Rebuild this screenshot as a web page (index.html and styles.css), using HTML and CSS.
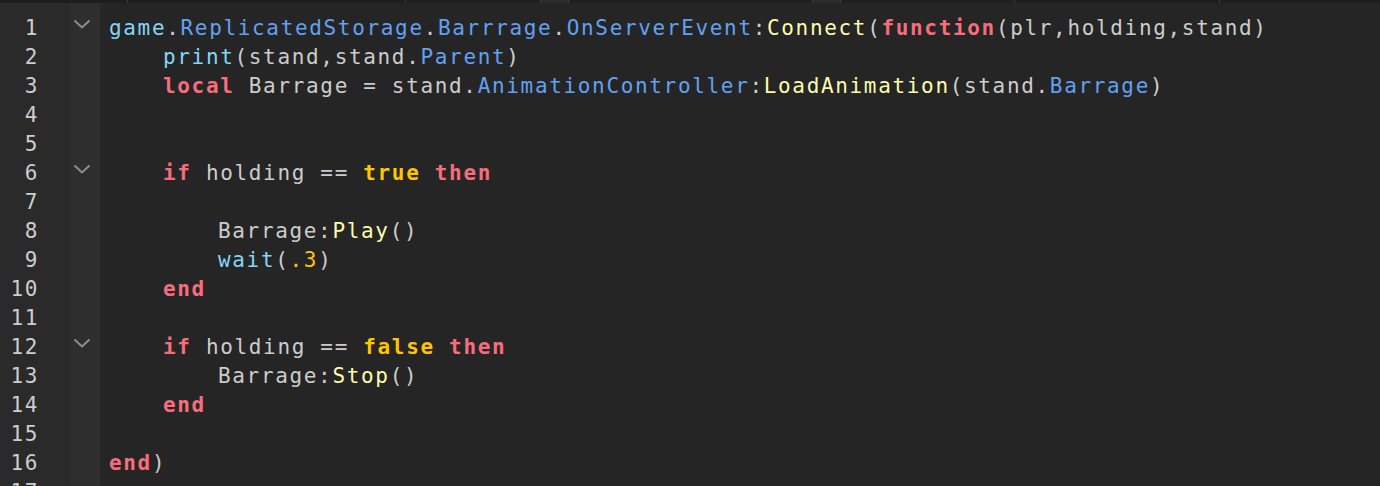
FILE: index.html
```html
<!DOCTYPE html>
<html>
<head>
<meta charset="utf-8">
<link rel="stylesheet" href="styles.css">
</head>
<body>
<div class="tabs">
  <div class="tab" style="width:128px"></div>
  <div class="tab" style="width:278px"></div>
  <div class="tab dim" style="width:135px"></div>
  <div class="tab lit" style="width:28px"></div>
  <div class="tab dim" style="width:244px"></div>
  <div class="tab lit" style="width:28px"></div>
  <div class="tab dim" style="width:174px"></div>
  <div class="tab" style="width:205px"></div>
  <div class="tab end"></div>
</div>
<div class="editor">
  <div class="numbers">
    <div>1</div><div>2</div><div>3</div><div>4</div><div>5</div><div>6</div><div>7</div><div>8</div><div>9</div><div>10</div><div>11</div><div>12</div><div>13</div><div>14</div><div>15</div><div>16</div><div>17</div>
  </div>
  <div class="folds">
    <div class="fold"><svg width="18" height="10" viewBox="0 0 18 10"><polyline points="1.5,1.5 9,8.5 16.5,1.5" fill="none" stroke="#8e8e8e" stroke-width="2"/></svg></div>
    <div class="fold"></div><div class="fold"></div><div class="fold"></div><div class="fold"></div>
    <div class="fold"><svg width="18" height="10" viewBox="0 0 18 10"><polyline points="1.5,1.5 9,8.5 16.5,1.5" fill="none" stroke="#8e8e8e" stroke-width="2"/></svg></div>
    <div class="fold"></div><div class="fold"></div><div class="fold"></div><div class="fold"></div><div class="fold"></div>
    <div class="fold"><svg width="18" height="10" viewBox="0 0 18 10"><polyline points="1.5,1.5 9,8.5 16.5,1.5" fill="none" stroke="#8e8e8e" stroke-width="2"/></svg></div>
    <div class="fold"></div><div class="fold"></div><div class="fold"></div><div class="fold"></div><div class="fold"></div>
  </div>
  <div class="code">
    <div class="ln"><span class="gl">game</span>.<span class="pr">ReplicatedStorage</span>.<span class="pr">Barrrage</span>.<span class="pr">OnServerEvent</span>:<span class="me">Connect</span>(<span class="kw">function</span>(plr,holding,stand)</div>
    <div class="ln i1"><span class="gl">print</span>(stand,stand.<span class="pr">Parent</span>)</div>
    <div class="ln i1"><span class="kw">local</span> Barrage = stand.<span class="pr">AnimationController</span>:<span class="me">LoadAnimation</span>(stand.<span class="pr">Barrage</span>)</div>
    <div class="ln"></div>
    <div class="ln"></div>
    <div class="ln i1"><span class="kw">if</span> holding == <span class="bo">true</span> <span class="kw">then</span></div>
    <div class="ln"></div>
    <div class="ln i2">Barrage:<span class="me">Play</span>()</div>
    <div class="ln i2"><span class="gl">wait</span>(<span class="nu">.3</span>)</div>
    <div class="ln i1"><span class="kw">end</span></div>
    <div class="ln"></div>
    <div class="ln i1"><span class="kw">if</span> holding == <span class="bo">false</span> <span class="kw">then</span></div>
    <div class="ln i2">Barrage:<span class="me">Stop</span>()</div>
    <div class="ln i1"><span class="kw">end</span></div>
    <div class="ln"></div>
    <div class="ln"><span class="kw">end</span>)</div>
    <div class="ln"></div>
  </div>
</div>
</body>
</html>
```
FILE: styles.css
```css
html, body {
  margin: 0;
  padding: 0;
  width: 1380px;
  height: 486px;
  overflow: hidden;
  background: #252525;
}

.tabs {
  display: flex;
  height: 3px;
  background: #1c1c1c;
}
.tab {
  height: 3px;
  border-right: 1px solid #3a3a3a;
  box-sizing: border-box;
  background: #1e1e1e;
}
.tab.dim { background: #1f1f1f; }
.tab.lit { background: #2c2c2c; }
.tab.end { flex: 1; border-right: none; }

.editor {
  display: flex;
  height: 483px;
  overflow: hidden;
  font-family: "DejaVu Sans Mono", monospace;
  font-size: 21px;
  letter-spacing: 1.66px;
  color: #cccccc;
}

.numbers {
  width: 70px;
  background: #2a2a2a;
  padding-top: 11px;
  box-sizing: border-box;
  text-align: right;
  padding-right: 31px;
  color: #cdcdcd;
}
.numbers div {
  height: 29px;
  line-height: 29px;
}

.folds {
  width: 30px;
  background: #2e2e2e;
  padding-top: 10px;
  box-sizing: border-box;
}
.fold {
  height: 29px;
  padding-left: 3px;
  padding-top: 6px;
  box-sizing: border-box;
}
.fold svg { display: block; }

.code {
  flex: 1;
  background: #252525;
  padding-top: 11px;
  padding-left: 9px;
  box-sizing: border-box;
}
.ln {
  height: 29px;
  line-height: 29px;
  white-space: pre;
}
.i1 { padding-left: 54px; }
.i2 { padding-left: 109px; }

.kw { color: #f86d7c; font-weight: bold; }
.bo { color: #ffc600; font-weight: bold; }
.nu { color: #ffc600; }
.gl { color: #84d6f7; }
.pr { color: #61a1f1; }
.me { color: #fdfbac; }
```
